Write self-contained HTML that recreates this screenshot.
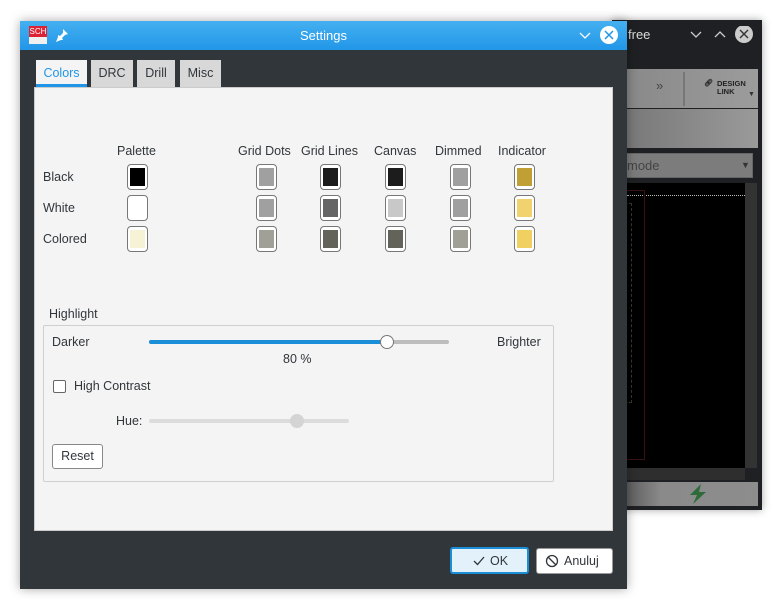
<!DOCTYPE html>
<html><head><meta charset="utf-8"><style>
*{box-sizing:border-box;margin:0;padding:0}
body{width:782px;height:609px;background:#fff;position:relative;overflow:hidden;font-family:"Liberation Sans","DejaVu Sans",sans-serif;font-size:12.5px;color:#31363b}
.a{position:absolute}
.sw{position:absolute;width:21px;height:26px;background:#fff;border:1px solid #777;border-radius:4px}
.sw i{position:absolute;left:2px;top:3px;width:15px;height:18px;display:block}
.lbl{position:absolute;font-size:12.5px;color:#31363b}
</style></head><body>
<!-- background window -->
<div class="a" style="left:612px;top:20px;width:150px;height:490px;background:#1f2023;box-shadow:0 0 8px rgba(0,0,0,.35)"></div>
<div class="lbl" style="left:628px;top:27px;color:#ddd;font-size:13px">free</div>
<svg class="a" style="left:686px;top:26px" width="70" height="18"><path d="M5 6l5 5 5-5M29 11l5-5 5 5" stroke="#ccc" stroke-width="1.3" fill="none"/><circle cx="58" cy="8" r="9" fill="#ccc"/><path d="M54 4l8 8M62 4l-8 8" stroke="#333" stroke-width="1.4"/></svg>
<div class="a" style="left:620px;top:69px;width:138px;height:39px;background:linear-gradient(90deg,#888,#9c9c9c)"></div>
<div class="a" style="left:683px;top:72px;width:2px;height:34px;background:#777"></div>
<div class="lbl" style="left:656px;top:78px;color:#444;font-size:13px">»</div>
<div class="lbl" style="left:704px;top:80px;color:#222;font-size:7px;line-height:8px;font-weight:bold">🔗︎</div>
<div class="lbl" style="left:717px;top:80px;color:#222;font-size:7.5px;line-height:8px;font-weight:bold">DESIGN<br>LINK</div>
<div class="lbl" style="left:748px;top:91px;color:#333;font-size:7px">▼</div>
<div class="a" style="left:620px;top:109px;width:138px;height:39px;background:linear-gradient(90deg,#777,#9a9a9a)"></div>
<div class="a" style="left:620px;top:153px;width:133px;height:25px;background:#7c7c7c;border:1px solid #666"></div>
<div class="lbl" style="left:627px;top:158px;color:#444;font-size:13px">mode</div>
<div class="lbl" style="left:741px;top:160px;color:#333;font-size:9px">▼</div>
<div class="a" style="left:620px;top:183px;width:125px;height:285px;background:#000"></div>
<div class="a" style="left:627px;top:195px;width:118px;border-top:1px dotted #bbb"></div>
<div class="a" style="left:620px;top:190px;width:25px;height:270px;border:1px solid #3a1214;border-left:none"></div>
<div class="a" style="left:620px;top:203px;width:12px;height:200px;border:1px dashed #3a3a28;border-left:none"></div>
<div class="a" style="left:745px;top:183px;width:12px;height:285px;background:#333"></div>
<div class="a" style="left:620px;top:468px;width:125px;height:12px;background:#2e2e2e"></div>
<div class="a" style="left:620px;top:482px;width:138px;height:24px;background:linear-gradient(90deg,#555,#8a8a8a 30%,#8d8d8d)"></div>
<svg class="a" style="left:687px;top:483px" width="24" height="22"><path d="M14 1L3 12h7l-4 9 13-12h-7z" fill="#2f6a3a"/></svg>
<!-- dialog -->
<div class="a" style="left:20px;top:21px;width:607px;height:568px;background:#31363b;box-shadow:0 0 10px rgba(0,0,0,.35)"></div>
<div class="a" style="left:20px;top:21px;width:607px;height:29px;background:linear-gradient(#45b0f0,#2196e8)"></div>
<div class="a" style="left:29px;top:26px;width:18px;height:18px;background:#f0f0f0"></div>
<div class="a" style="left:29px;top:26px;width:18px;height:11px;background:#d23;color:#fff;font-size:8px;line-height:11px;text-align:center">SCH</div>
<svg class="a" style="left:55px;top:28px" width="14" height="14"><path d="M8 1l5 5-3 1-3 3 1 2-2 0-5 2 2-5 0-2 2 1 3-3z" fill="#fff"/></svg>
<div class="lbl" style="left:0;width:647px;text-align:center;top:28px;color:#fff;font-size:13px">Settings</div>
<svg class="a" style="left:578px;top:26px" width="44" height="20"><path d="M2 7l5 5 5-5" stroke="#fff" stroke-width="1.3" fill="none"/><circle cx="31" cy="9" r="9" fill="#fff"/><path d="M27 5l8 8M35 5l-8 8" stroke="#2196e8" stroke-width="1.5"/></svg>
<!-- tabs -->
<div class="a" style="left:36px;top:60px;width:51px;height:27px;background:#f4f4f4;border-bottom:3px solid #2196e8;color:#2196e8;text-align:center;line-height:26px;font-size:12.5px">Colors</div>
<div class="a" style="left:91px;top:60px;width:42px;height:27px;background:#d8d8d8;text-align:center;line-height:26px">DRC</div>
<div class="a" style="left:137px;top:60px;width:38px;height:27px;background:#d8d8d8;text-align:center;line-height:26px">Drill</div>
<div class="a" style="left:180px;top:60px;width:41px;height:27px;background:#d8d8d8;text-align:center;line-height:26px">Misc</div>
<div class="a" style="left:34px;top:87px;width:579px;height:444px;background:#f4f4f4;border:1px solid #ccc"></div>
<!-- headers -->
<div class="lbl" style="left:117px;top:144px">Palette</div>
<div class="lbl" style="left:238px;top:144px">Grid Dots</div>
<div class="lbl" style="left:301px;top:144px">Grid Lines</div>
<div class="lbl" style="left:374px;top:144px">Canvas</div>
<div class="lbl" style="left:435px;top:144px">Dimmed</div>
<div class="lbl" style="left:498px;top:144px">Indicator</div>
<div class="lbl" style="left:43px;top:170px">Black</div>
<div class="lbl" style="left:43px;top:201px">White</div>
<div class="lbl" style="left:43px;top:232px">Colored</div>
<!-- row1 -->
<div class="sw" style="left:127px;top:164px"><i style="background:#000"></i></div>
<div class="sw" style="left:256px;top:164px"><i style="background:#a0a0a0"></i></div>
<div class="sw" style="left:320px;top:164px"><i style="background:#1c1c1c"></i></div>
<div class="sw" style="left:385px;top:164px"><i style="background:#1c1c1c"></i></div>
<div class="sw" style="left:450px;top:164px"><i style="background:#a0a0a0"></i></div>
<div class="sw" style="left:514px;top:164px"><i style="background:#c0a035"></i></div>
<!-- row2 -->
<div class="sw" style="left:127px;top:195px"><i style="background:#fff"></i></div>
<div class="sw" style="left:256px;top:195px"><i style="background:#a0a0a0"></i></div>
<div class="sw" style="left:320px;top:195px"><i style="background:#656565"></i></div>
<div class="sw" style="left:385px;top:195px"><i style="background:#c8c8c8"></i></div>
<div class="sw" style="left:450px;top:195px"><i style="background:#a0a0a0"></i></div>
<div class="sw" style="left:514px;top:195px"><i style="background:#f2d26e"></i></div>
<!-- row3 -->
<div class="sw" style="left:127px;top:226px"><i style="background:#f6f2d6"></i></div>
<div class="sw" style="left:256px;top:226px"><i style="background:#a0a096"></i></div>
<div class="sw" style="left:320px;top:226px"><i style="background:#63635a"></i></div>
<div class="sw" style="left:385px;top:226px"><i style="background:#63635a"></i></div>
<div class="sw" style="left:450px;top:226px"><i style="background:#a0a096"></i></div>
<div class="sw" style="left:514px;top:226px"><i style="background:#f0d060"></i></div>
<!-- highlight -->
<div class="lbl" style="left:49px;top:307px">Highlight</div>
<div class="a" style="left:43px;top:325px;width:511px;height:157px;border:1px solid #cfcfcf;border-radius:2px"></div>
<div class="lbl" style="left:52px;top:335px">Darker</div>
<div class="lbl" style="left:497px;top:335px">Brighter</div>
<div class="a" style="left:149px;top:340px;width:300px;height:4px;border-radius:2px;background:#bdbdbd"></div>
<div class="a" style="left:149px;top:340px;width:238px;height:4px;border-radius:2px;background:#1a8fd8"></div>
<div class="a" style="left:380px;top:335px;width:14px;height:14px;border-radius:50%;background:#fff;border:1px solid #777"></div>
<div class="lbl" style="left:283px;top:352px">80 %</div>
<div class="a" style="left:53px;top:380px;width:13px;height:13px;border:1px solid #666;border-radius:2px;background:#fff"></div>
<div class="lbl" style="left:74px;top:379px">High Contrast</div>
<div class="lbl" style="left:116px;top:414px">Hue:</div>
<div class="a" style="left:149px;top:419px;width:200px;height:4px;border-radius:2px;background:#dcdcdc"></div>
<div class="a" style="left:290px;top:414px;width:14px;height:14px;border-radius:50%;background:#d4d4d4"></div>
<div class="a" style="left:52px;top:444px;width:51px;height:25px;border:1px solid #888;border-radius:3px;background:#fff;text-align:center;line-height:23px">Reset</div>
<!-- buttons -->
<div class="a" style="left:450px;top:547px;width:79px;height:27px;border:2px solid #1a8fd8;border-radius:3px;background:#e3f1fb"></div>
<svg class="a" style="left:472px;top:555px" width="14" height="12"><path d="M2 6l3.5 3.5L12 2" stroke="#31363b" stroke-width="1.3" fill="none"/></svg>
<div class="lbl" style="left:490px;top:554px">OK</div>
<div class="a" style="left:536px;top:548px;width:77px;height:26px;border:1px solid #999;border-radius:3px;background:#fff"></div>
<svg class="a" style="left:545px;top:554px" width="14" height="14"><circle cx="7" cy="7" r="5.5" stroke="#31363b" stroke-width="1.3" fill="none"/><path d="M3 3l8 8" stroke="#31363b" stroke-width="1.3"/></svg>
<div class="lbl" style="left:564px;top:554px">Anuluj</div>
</body></html>
